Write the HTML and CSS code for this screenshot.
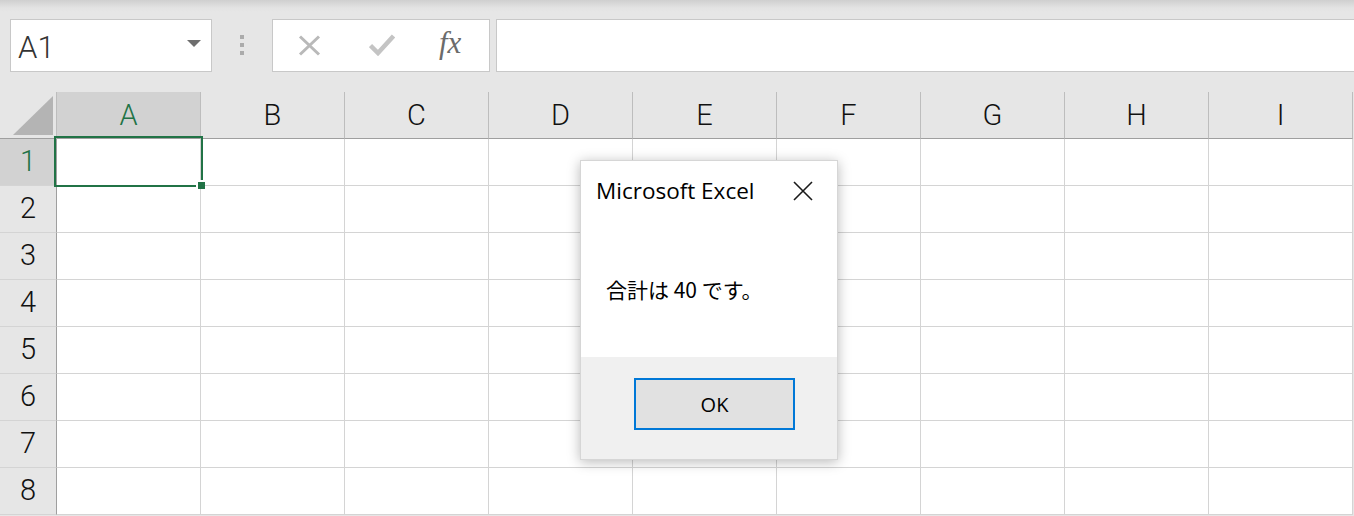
FILE: index.html
```html
<!DOCTYPE html>
<html lang="ja">
<head>
<meta charset="utf-8">
<title>Excel</title>
<link rel="stylesheet" href="styles.css">
</head>
<body>
<div class="app">
  <div class="toolbar">
    <div class="namebox">
      <span class="nb-text">A1</span>
      <svg class="nb-arrow" width="14" height="7" viewBox="0 0 14 7"><polygon points="0,0 14,0 7,7" fill="#6e6e6e"/></svg>
    </div>
    <div class="dots"><span></span><span></span><span></span></div>
    <div class="fbtns">
      <svg class="ico-x" width="23" height="21" viewBox="0 0 23 21"><path d="M2 1.5 L21 19.5 M21 1.5 L2 19.5" stroke="#b9b9b9" stroke-width="3" fill="none"/></svg>
      <svg class="ico-check" width="26" height="22" viewBox="0 0 26 22"><path d="M1.5 11.5 L9 19 L24.5 2" stroke="#c4c4c4" stroke-width="4.5" fill="none" stroke-linejoin="miter"/></svg>
      <span class="ico-fx">fx</span>
    </div>
    <div class="finput"></div>
  </div>
  <div class="sheet">
    <div class="grid">
      <div class="corner"><svg width="40" height="39" viewBox="0 0 40 39"><polygon points="0,39 40,39 40,0" fill="#b4b4b4"/></svg></div>
      <div class="ch sel">A</div><div class="ch">B</div><div class="ch">C</div><div class="ch">D</div><div class="ch">E</div><div class="ch">F</div><div class="ch">G</div><div class="ch">H</div><div class="ch">I</div>

      <div class="rh sel">1</div><div class="c"></div><div class="c"></div><div class="c"></div><div class="c"></div><div class="c"></div><div class="c"></div><div class="c"></div><div class="c"></div><div class="c"></div>
      <div class="rh">2</div><div class="c"></div><div class="c"></div><div class="c"></div><div class="c"></div><div class="c"></div><div class="c"></div><div class="c"></div><div class="c"></div><div class="c"></div>
      <div class="rh">3</div><div class="c"></div><div class="c"></div><div class="c"></div><div class="c"></div><div class="c"></div><div class="c"></div><div class="c"></div><div class="c"></div><div class="c"></div>
      <div class="rh">4</div><div class="c"></div><div class="c"></div><div class="c"></div><div class="c"></div><div class="c"></div><div class="c"></div><div class="c"></div><div class="c"></div><div class="c"></div>
      <div class="rh">5</div><div class="c"></div><div class="c"></div><div class="c"></div><div class="c"></div><div class="c"></div><div class="c"></div><div class="c"></div><div class="c"></div><div class="c"></div>
      <div class="rh">6</div><div class="c"></div><div class="c"></div><div class="c"></div><div class="c"></div><div class="c"></div><div class="c"></div><div class="c"></div><div class="c"></div><div class="c"></div>
      <div class="rh">7</div><div class="c"></div><div class="c"></div><div class="c"></div><div class="c"></div><div class="c"></div><div class="c"></div><div class="c"></div><div class="c"></div><div class="c"></div>
      <div class="rh">8</div><div class="c"></div><div class="c"></div><div class="c"></div><div class="c"></div><div class="c"></div><div class="c"></div><div class="c"></div><div class="c"></div><div class="c"></div>
    </div>
    <div class="selection"><span class="handle"></span></div>
  </div>

  <div class="dialog">
    <div class="dlg-body">
      <div class="dlg-title">
        <span>Microsoft Excel</span>
        <svg class="dlg-close" width="20" height="20" viewBox="0 0 20 20"><path d="M1 1 L19 19 M19 1 L1 19" stroke="#1a1a1a" stroke-width="1.6" fill="none"/></svg>
      </div>
      <div class="dlg-msg">合計は 40 です。</div>
    </div>
    <div class="dlg-foot">
      <button class="ok">OK</button>
    </div>
  </div>
</div>
</body>
</html>
```
FILE: styles.css
```css
html, body {
  margin: 0;
  padding: 0;
}
body {
  width: 1354px;
  height: 516px;
  overflow: hidden;
  background: #e6e6e6;
  font-family: "Noto Sans", "Noto Sans CJK JP", sans-serif;
}
.app {
  position: relative;
  width: 1354px;
  height: 516px;
  overflow: hidden;
}
.toolbar {
  height: 92px;
  box-sizing: border-box;
  padding: 19px 0 0 10px;
  display: flex;
  align-items: flex-start;
  background: linear-gradient(#cfcfcf 0px, #e3e3e3 8px, #e6e6e6 12px);
}
.namebox {
  width: 202px;
  height: 53px;
  box-sizing: border-box;
  border: 1px solid #c8c8c8;
  background: #fff;
  display: flex;
  align-items: center;
  justify-content: space-between;
  padding: 0 10px 0 7px;
}
.nb-text {
  font-family: Roboto, "Noto Sans", sans-serif;
  font-weight: 300;
  font-size: 31px;
  color: #333;
  line-height: 1;
  margin-top: 4px;
}
.nb-arrow {
  margin-top: -4px;
}
.dots {
  margin: 16px 0 0 28px;
  display: flex;
  flex-direction: column;
  gap: 4px;
}
.dots span {
  display: block;
  width: 4px;
  height: 4px;
  background: #ababab;
}
.fbtns {
  margin-left: 28px;
  width: 218px;
  height: 53px;
  box-sizing: border-box;
  border: 1px solid #c8c8c8;
  background: #fff;
  display: flex;
  align-items: center;
  padding-left: 25px;
}
.ico-check {
  margin-left: 48px;
  margin-top: -2px;
}
.ico-fx {
  margin-left: 44px;
  font-family: "Liberation Serif", "DejaVu Serif", serif;
  font-style: italic;
  font-size: 31px;
  color: #6b6b6b;
  line-height: 1;
  margin-top: -6px;
}
.finput {
  margin-left: 6px;
  flex: 1;
  margin-right: -10px;
  height: 53px;
  box-sizing: border-box;
  border: 1px solid #c8c8c8;
  background: #fff;
}
.sheet {
  position: relative;
}
.grid {
  display: grid;
  grid-template-columns: 57px repeat(9, 144px);
  grid-auto-rows: 47px;
}
.grid > div {
  box-sizing: border-box;
}
.corner {
  border-right: 1px solid #bdbdbd;
  border-bottom: 1px solid #9f9f9f;
  display: flex;
  align-items: flex-end;
  justify-content: flex-end;
  padding: 0 3px 3px 0;
}
.corner svg {
  display: block;
}
.ch,
.rh {
  font-family: Roboto, "Noto Sans", sans-serif;
  font-weight: 300;
  font-size: 29px;
  color: #111;
  display: flex;
  align-items: center;
  justify-content: center;
}
.ch {
  border-right: 1px solid #bdbdbd;
  border-bottom: 1px solid #9f9f9f;
  padding-bottom: 1px;
}
.rh {
  border-right: 1px solid #9f9f9f;
  border-bottom: 1px solid #d4d4d4;
  background: #e6e6e6;
  padding-bottom: 3px;
}
.ch.sel,
.rh.sel {
  background: #d2d2d2;
  color: #217346;
}
.c {
  background: #fff;
  border-right: 1px solid #d4d4d4;
  border-bottom: 1px solid #d4d4d4;
}
.selection {
  position: absolute;
  left: 54px;
  top: 44px;
  width: 149px;
  height: 51px;
  box-sizing: border-box;
  border: 2px solid #217346;
}
.handle {
  position: absolute;
  right: -4px;
  bottom: -4px;
  width: 7px;
  height: 7px;
  background: #217346;
  box-shadow: -1px -1px 0 1px #fff;
}
.dialog {
  position: absolute;
  left: 580px;
  top: 160px;
  width: 258px;
  height: 300px;
  box-sizing: border-box;
  border: 1px solid #d6d6d6;
  box-shadow: 0 2px 12px rgba(0, 0, 0, 0.28);
  display: flex;
  flex-direction: column;
  background: #f0f0f0;
}
.dlg-body {
  height: 196px;
  background: #fff;
}
.dlg-title {
  height: 60px;
  display: flex;
  align-items: center;
  justify-content: space-between;
  padding: 0 24px 0 15px;
  font-family: "Open Sans", "Noto Sans", sans-serif;
  font-size: 22.5px;
  color: #000;
}
.dlg-title span {
  margin-top: -1px;
}
.dlg-close {
  margin-top: -1px;
}
.dlg-msg {
  padding: 58px 0 0 25px;
  font-family: "Noto Sans CJK JP", sans-serif;
  font-size: 21px;
  color: #000;
  line-height: 1;
}
.dlg-foot {
  flex: 1;
  display: flex;
  justify-content: flex-end;
  align-items: flex-start;
  padding: 21px 42px 0 0;
}
.ok {
  width: 161px;
  height: 52px;
  box-sizing: border-box;
  border: 2px solid #0078d7;
  background: #e1e1e1;
  font-family: "Open Sans", "Noto Sans", sans-serif;
  font-size: 20px;
  color: #000;
  padding: 0;
  margin: 0;
}
```
